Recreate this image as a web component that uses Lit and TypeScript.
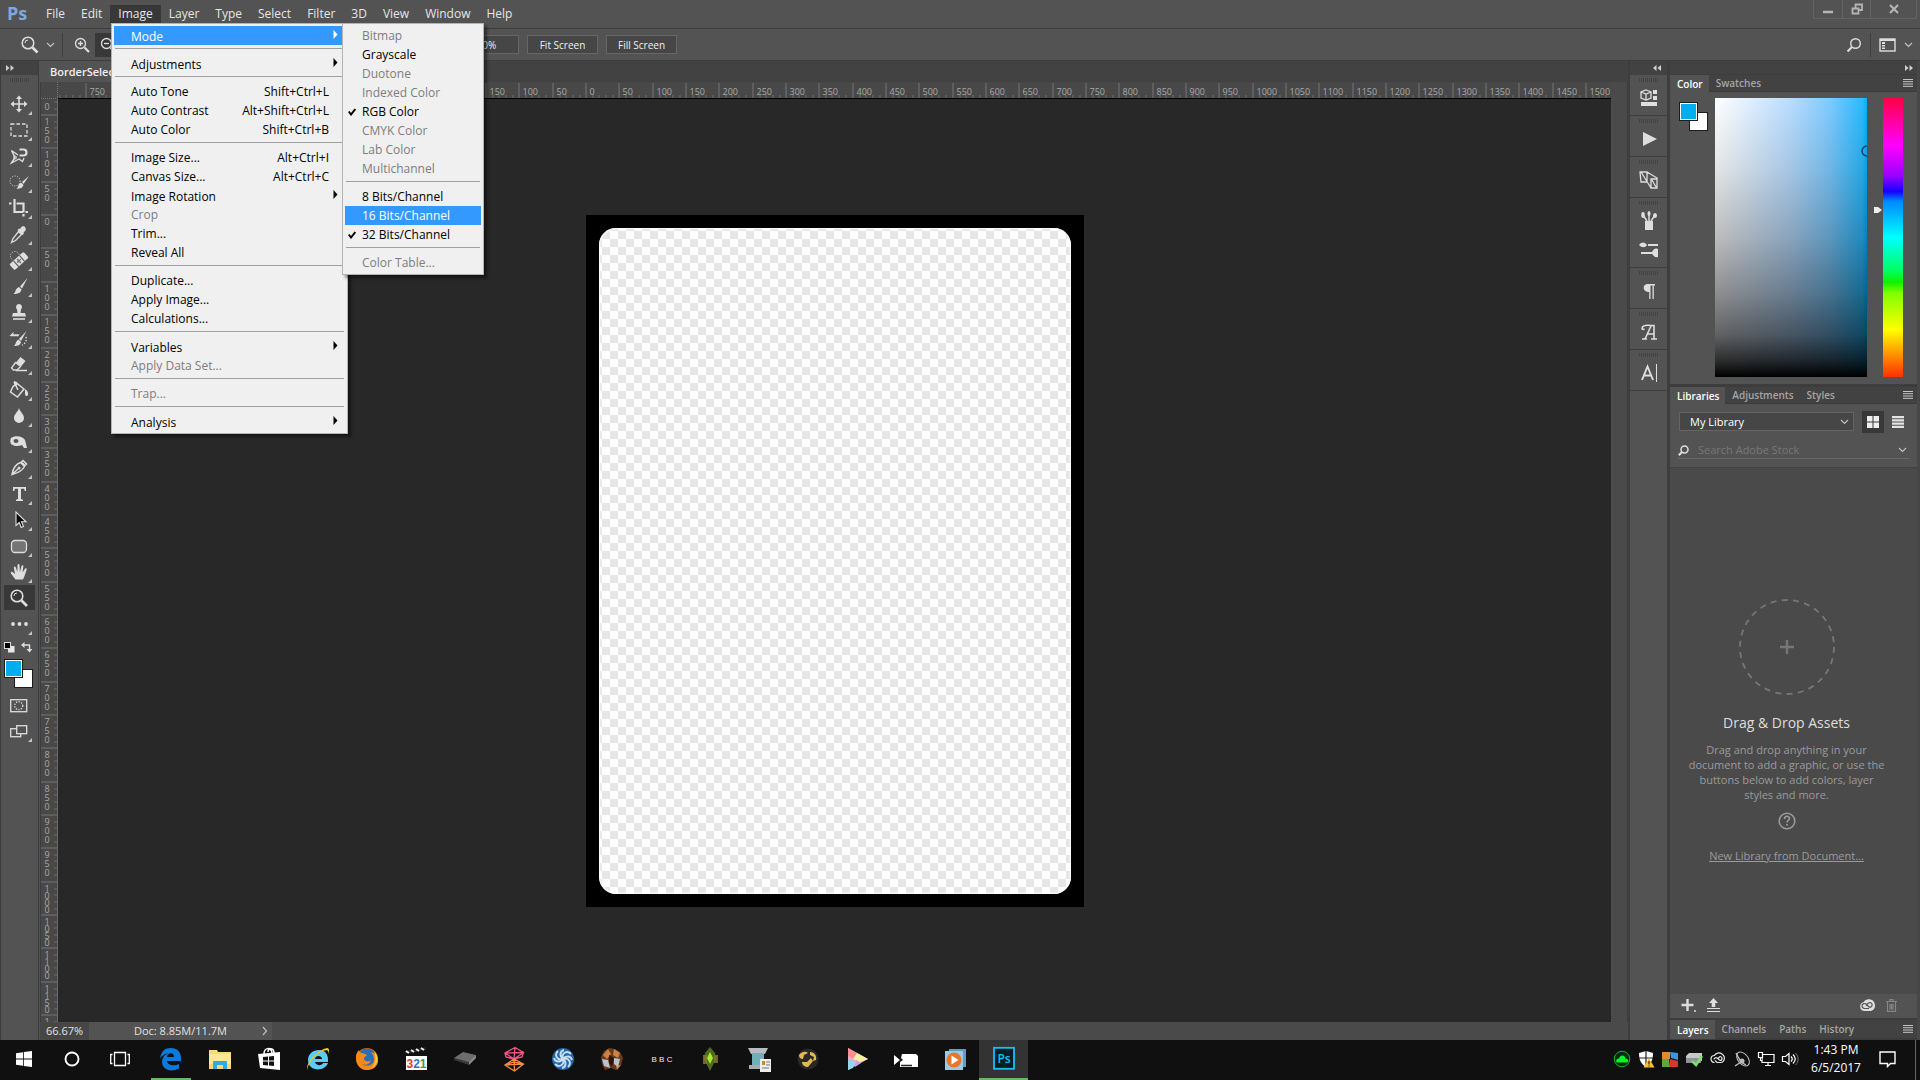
import { LitElement, html, svg, css, nothing, TemplateResult } from "lit";
import { customElement } from "lit/decorators.js";
import { classMap } from "lit/directives/class-map.js";

interface MenuEntry {
  label?: string;
  keys?: string;
  off?: boolean;
  sub?: boolean;
  check?: boolean;
  hot?: boolean;
}

const SEP: MenuEntry = {};

const IMAGE_MENU: MenuEntry[] = [
  { label: "Mode", sub: true, hot: true },
  SEP,
  { label: "Adjustments", sub: true },
  SEP,
  { label: "Auto Tone", keys: "Shift+Ctrl+L" },
  { label: "Auto Contrast", keys: "Alt+Shift+Ctrl+L" },
  { label: "Auto Color", keys: "Shift+Ctrl+B" },
  SEP,
  { label: "Image Size...", keys: "Alt+Ctrl+I" },
  { label: "Canvas Size...", keys: "Alt+Ctrl+C" },
  { label: "Image Rotation", sub: true },
  { label: "Crop", off: true },
  { label: "Trim..." },
  { label: "Reveal All" },
  SEP,
  { label: "Duplicate..." },
  { label: "Apply Image..." },
  { label: "Calculations..." },
  SEP,
  { label: "Variables", sub: true },
  { label: "Apply Data Set...", off: true },
  SEP,
  { label: "Trap...", off: true },
  SEP,
  { label: "Analysis", sub: true },
];

const MODE_MENU: MenuEntry[] = [
  { label: "Bitmap", off: true },
  { label: "Grayscale" },
  { label: "Duotone", off: true },
  { label: "Indexed Color", off: true },
  { label: "RGB Color", check: true },
  { label: "CMYK Color", off: true },
  { label: "Lab Color", off: true },
  { label: "Multichannel", off: true },
  SEP,
  { label: "8 Bits/Channel" },
  { label: "16 Bits/Channel", hot: true },
  { label: "32 Bits/Channel", check: true },
  SEP,
  { label: "Color Table...", off: true },
];

const svgIcon = (w: number, h: number, body: unknown) => html`<svg
  width=${w}
  height=${h}
  viewBox="0 0 ${w} ${h}"
  aria-hidden="true"
>${body}</svg>`;

const chevron = () =>
  svgIcon(9, 6, svg`<path d="M1 1l3.5 3.5L8 1" fill="none" stroke="#c4c4c4" stroke-width="1.1"/>`);
const doubleArrow = (left: boolean) =>
  svgIcon(
    8,
    6,
    left
      ? svg`<path d="M3.5 0v6L0 3zM8 0v6L4.500 3z" fill="#d0d0d0"/>`
      : svg`<path d="M0 0v6l3.500-3zM4.500 0v6L8 3z" fill="#d0d0d0"/>`
  );
const burger = () => svgIcon(10, 8, svg`<path d="M0 .5h10M0 2.700h10M0 5h10M0 7.300h10" stroke="#c6c6c6"/>`);

const C = "#dedede";
const brushShape = svg`<path d="M20.500 4L13 12.500l2 2z M12 13l2.500 2.500c-.5 3-3 4.500-8 4.500 2.500-1.500 1.500-5.500 5.500-7z" fill=${C}/>`;

const TOOLS: [string, TemplateResult][] = [
  ["Move", svg`<path d="M12 5v14M5 12h14" stroke=${C} stroke-width="1.600"/><path d="M12 3.500l3 3.500H9zM12 20.500l3-3.500H9zM3.500 12L7 9v6zM20.500 12L17 9v6z" fill=${C}/>`],
  ["Marquee", svg`<rect x="4" y="6" width="16" height="12" fill="none" stroke=${C} stroke-width="1.300" stroke-dasharray="3.500 2"/>`],
  ["Lasso", svg`<path d="M4.500 6.500L11 11M4.500 6.500l3.500 7-3.500 5.500 7.500-4 3.500 2.500 1.500-3.500" fill="none" stroke=${C} stroke-width="1.400"/><path d="M12.500 5.500h4a2.800 2.800 0 0 1 0 6h-4" fill="none" stroke=${C} stroke-width="2.200"/><circle cx="8" cy="13.500" r="1.500" fill="none" stroke=${C}/>`],
  ["Quick selection", svg`<circle cx="8" cy="11" r="5" fill="none" stroke=${C} stroke-dasharray="1 1.500"/><path d="M22 6l-7 6 1.500 2zM14 12.500l2.500 2.500c-1 3-3 3.500-7 4 2-1.500 1.500-5 4.500-6.500z" fill=${C}/>`],
  ["Crop", svg`<path d="M7.500 3v13H16M2 7.500h2.500M9.500 7.500h7v9M16.500 18v2.500M18.500 16h2.500" fill="none" stroke=${C} stroke-width="2.200"/>`],
  ["Eyedropper", svg`<path d="M14 5.500c2-3 6 0 4.500 3l-2 2 .5 1-1.500 1.500-5-5L12 6.500l1 .5z" fill=${C}/><path d="M11.500 9.500l3 3-6 6-4 2 1.500-4z" fill="none" stroke=${C} stroke-width="1.300"/>`],
  ["Healing brush", svg`<circle cx="8" cy="8" r="4.500" fill="none" stroke=${C} stroke-dasharray="1 1.500"/><g transform="rotate(-42 12 13)"><rect x="2.500" y="9" width="19" height="8" rx="1.500" fill=${C}/><path d="M8 9v8M16 9v8" stroke="#535353"/><path d="M12 10.500v5M9.800 13h4.500" stroke="#535353" stroke-width="1.600" stroke-dasharray="1.300 .6"/></g>`],
  ["Brush", brushShape],
  ["Clone stamp", svg`<path d="M12 4a3.200 3.200 0 0 1 2 5.500L13.500 13H18l1 3.500H5L6 13h4.500L10 9.500A3.200 3.200 0 0 1 12 4z" fill=${C}/><path d="M6 19h12" stroke=${C} stroke-width="1.600"/>`],
  ["History brush", svg`<path d="M19.500 5L12 13l2 2zM11.500 13.500L14 16c-.5 3-3 4-7 4 2-1.500 1.500-5 4.500-6.500z" fill=${C}/><path d="M2.500 10l4-4v2.500c2-.5 4-.5 6 0l-1.500 2c-2-.5-6 0-8.500-.5z" fill=${C}/><path d="M19 11c1 4-1 7-4 8" fill="none" stroke=${C} stroke-dasharray="1.300 1.700" stroke-width="1.400"/>`],
  ["Eraser", svg`<path d="M13.500 5l5 4-4.500 5.500-5-4z" fill=${C}/><path d="M8.500 10.500l5 4-3.500 3.500H6.500L4.500 16zM9 18.500h11" fill="none" stroke=${C} stroke-width="1.300"/>`],
  ["Paint bucket", svg`<path d="M6 8.500L3.500 14l7 5 6.500-8-7-5.500zM7 4l4 8" fill="none" stroke=${C} stroke-width="1.500"/><path d="M7 3l3 1v4l-3-2zM18 11c3 2 3.500 4 3 6-1 2-3 1-3-1z" fill=${C}/>`],
  ["Blur", svg`<path d="M12 4c1 4 5 6 5 10a5 5 0 0 1-10 0c0-4 4-6 5-10z" fill=${C}/>`],
  ["Dodge", svg`<path d="M4 8c4-3 12-2 14 2l2 8h-3l-2-3c-4 2-9 1-11-1-1-2-1-4 0-6z" fill=${C}/><ellipse cx="9" cy="11" rx="2.500" ry="2" fill="#535353"/>`],
  ["Pen", svg`<path d="M16 4.500l3.500 3.500-1.500 1.500-3.500-3.500zM13.500 6.500l4 4c-2 4-5 6-12.500 8 1-6 4-10.500 8.500-12zM5 18.500l6-5.500" fill="none" stroke=${C} stroke-width="1.500"/><circle cx="12" cy="12" r="1.500" fill=${C}/>`],
  ["Type", svg`<path d="M6 5h13v4h-1.200L17 6.700h-3V17l2 .8V19H9v-1.200l2-.8V6.700H8L7.200 9H6z" fill=${C}/>`],
  ["Path selection", svg`<path d="M9 4v13.500l3.200-3 2 5 2.300-1-2-4.700h4.500z" fill="#0a0a0a" stroke=${C} stroke-width="1.100"/>`],
  ["Rounded rectangle", svg`<rect x="4.500" y="6.500" width="15" height="12" rx="3.500" fill="#757575" stroke=${C} stroke-width="1.300"/>`],
  ["Hand", svg`<path d="M8.500 19.500L4 13.500c-.8-1.500.7-2.300 1.800-1.200L8 14 6.800 7.500c0-1.400 1.600-1.500 2 0L10.300 12 10.500 5c.2-1.500 1.900-1.500 2 0l.4 7 1.600-6c.5-1.300 2-1 1.900.3L15.500 12.500 18 8.800c.8-1 2-.4 1.700.7L17.500 16 16 19.500z" fill=${C}/>`],
  ["Zoom", svg`<circle cx="10" cy="10" r="5.800" fill="none" stroke=${C} stroke-width="1.600"/><path d="M7 10a3 3 0 0 1 3-3" fill="none" stroke=${C}/><path d="M14.500 14.500l5.500 5.500" stroke=${C} stroke-width="2.600"/>`],
  ["More tools", svg`<circle cx="6" cy="12" r="1.900" fill=${C}/><circle cx="12.500" cy="12" r="1.900" fill=${C}/><circle cx="19" cy="12" r="1.900" fill=${C}/>`],
];

const DOCK: [string, TemplateResult][][] = [
  [["Properties", svg`<path d="M7 2l5 2v6l-5 2-5-2V4z M2 4l5 2 5-2M7 6v6" fill="none" stroke=${C} stroke-width="1.300"/><path d="M14 2h4v4h-4zM14 8h4v4h-4zM2 14h16v4H2z" fill=${C}/>`]],
  [["Actions", svg`<path d="M4 3l14 7-14 7z" fill=${C}/>`]],
  [["Clone source", svg`<path d="M1 2h7v10H2zM2 2l10 16M8 2l10 6v10h-6V9h6M13 10l4 7" fill="none" stroke=${C} stroke-width="1.300"/>`]],
  [
    ["Brush presets", svg`<path d="M6 10h8v9H6z" fill=${C}/><path d="M8 10L4 4M10 10V3M12 10l4-6" stroke=${C} stroke-width="1.500"/><ellipse cx="4" cy="4" rx="1.800" ry="3" fill=${C}/><ellipse cx="10" cy="2.500" rx="1.500" ry="2.500" fill=${C}/><ellipse cx="16" cy="4.500" rx="2" ry="2.500" fill=${C}/>`],
    ["Brush", svg`<path d="M9 5h10M2 13h12" stroke=${C} stroke-width="2"/><path d="M0 5c3-3.500 6-3 8 0-2 3-5 3-8 0zM13 13c1-5 5-5 6-4v8c-3 1-5-1-6-4z" fill=${C}/>`],
  ],
  [["Paragraph", svg`<path d="M9 3h7v1.500h-1.200V18h-1.300V4.500h-2V18h-1.300v-7C3 11 3 3 9 3z" fill=${C}/>`]],
  [["Glyphs", svg`<path d="M3 6c1-3 5-3 9-2.500h3V17M12 4L6 17M3 17h5M12 17h6M8 12h7M3 6c0 2 2 2 2 .5" fill="none" stroke=${C} stroke-width="1.600"/>`]],
  [["Character", svg`<path d="M3 17L8.500 3.500 14 17M5 12.500h7" fill="none" stroke=${C} stroke-width="1.900"/><path d="M17.500 1v18" stroke=${C}/>`]],
];

const APPS: [string, TemplateResult][] = [
  ["Edge", svg`<path d="M2 13C3 5 7 2 13 2c6 0 10 4 10 10v3H9c1 5 8 5 12 3v4.500C12 27 4 23 4 16c0-4 2-7 6-8.500C5 8 3 11 2 13zM9 11h7c0-5-6-5-7 0z" fill="#0a7bdc"/>`],
  ["File Explorer", svg`<path d="M2 4h8l1 2h13v17H2z" fill="#fbd976"/><path d="M2 8h22v10H2z" fill="#fee79a"/><path d="M6 15h14v8h-4v-4h-6v4H6z" fill="#33a9e0"/>`],
  ["Store", svg`<path d="M2 8l22-2v18L4 22z" fill="#fff"/><path d="M8 8c0-7 8-7 8-1M12 6c0-5 6-4 6 1" fill="none" stroke="#fff" stroke-width="1.500"/><path d="M7 11l5-.5v4H7zM13 10.400l5-.4v4.500h-5zM7 15.500h5v4L7 19zM13 15.500h5V20l-5-.5z" fill="#111"/>`],
  ["Internet Explorer", svg`<path d="M3 14C3 8 8 4 14 4c6 0 9 4 9 10v2H10c1 4 7 4 8 1h5c-3 9-20 9-20-3zm7-1h7c0-4-7-4-7 0z" fill="#5ccbf5"/><path d="M3 24C-1 19 12 4 22 2c3 0 2 4 1 6 1-5-2-4-5-3C10 8 1 20 3 24z" fill="#f7c52c"/>`],
  ["Firefox", svg`<circle cx="13" cy="13" r="11" fill="#e66000"/><circle cx="13" cy="11" r="8.500" fill="#2a6fb5"/><path d="M2 11c0-4 2-6 3-7 0 2 1 3 3 3 2 1 4 1 5 2-1 2-3 1-3 4 1 3 5 3 7 1-1 5-7 6-10 3 3 4 9 4 12 0 2-3 1-7-2-11 5 2 7 6 7 9 0 5-5 9-11 9C6 24 2 18 2 11z" fill="#f58a1c"/><path d="M20 5c4 4 4 8 3 11-1 3-3 5-6 7 5-5 5-12 3-18z" fill="#fbd13c"/>`],
  ["Media Player Classic", svg`<path d="M2 5l21-4v3L2 8z" fill="#222"/><path d="M3 5l3 2M8 4l3 2M13 3l3 2M18 2l3 2" stroke="#eee" stroke-width="2"/><path d="M3 10h21v14H3z" fill="#fff"/><text x="13.500" y="21.500" text-anchor="middle" font-size="12" font-weight="700" font-family="Liberation Sans, sans-serif"><tspan fill="#d8442c">3</tspan><tspan fill="#2a74c8">2</tspan><tspan fill="#3f9c42">1</tspan></text>`],
  ["Drive", svg`<path d="M2 12l9-6 13 3-7 9z" fill="#6c6c6c"/><path d="M2 12l15 4v3L2 14z" fill="#383838"/><path d="M17 16l7-7v3l-7 7z" fill="#8a8a8a"/>`],
  ["Hex", svg`<g fill="none" stroke-width="1.300"><path d="M14 1.500L4 7l9 6 9.500-6.500zM14 1.500L13 13M4 7l18.500-.5M4 7l1 4 8 2 8-2 1.500-4.500" stroke="#ee5684"/><path d="M13 13l-9 6 9.500 6 9-7zM13 13l.5 12M4 19l18.500-1M4 19l9-3 9.500 2" stroke="#f28a48"/></g>`],
  ["Browser", svg`<circle cx="13" cy="13" r="11" fill="#2565a8"/><g fill="none" stroke="#c6e2f6" stroke-width="1.900"><path d="M13 13c-2-6 4-9 8-5M13 13c6-2 9 4 5 8M13 13c2 6-4 9-8 5M13 13c-6 2-9-4-5-8M13 13c3-4 8-3 9 1M13 13c4 3 3 8-1 9M13 13c-3 4-8 3-9-1M13 13c-4-3-3-8 1-9"/></g>`],
  ["Game", svg`<path d="M5 5l5-3 6 1 5 3 3 6-2 7-5 5-5-2-6 2-3-6-1-7z" fill="#6d3b1c"/><path d="M4 9l5-6 3 5-4 5zM15 3l6 4-2 5-5-3zM17 20l5-1-4 5z" fill="#c98445"/><path d="M3 13l6 1 2 8-6-2zM15 12l6 1-2 8-4-3z" fill="#b9c4cf"/><path d="M10 9l5 3-2 9-3-4z" fill="#2c150b"/>`],
  ["BBC", svg`<text x="14" y="16" text-anchor="middle" font-size="8" fill="#eee" font-family="Liberation Sans, sans-serif">B B C</text>`],
  ["Plumbob", svg`<path d="M13 1l5 6 1 6-6 12-6-12 1-6z" fill="#4d6b1f"/><path d="M6 9h4v9H6zM17 9h4v8h-4z" fill="#8a7c2c" opacity=".8"/><path d="M13 6l3 6-3 6-3-6z" fill="#a5e82d"/>`],
  ["Scanner", svg`<path d="M2 2h20l-3 6H5z" fill="#b7bcc0"/><path d="M6 7h12v13H6z" fill="#6fb0bb"/><path d="M3 19h17v4H3z" fill="#a8adb0"/><path d="M14 13h11v13H14z" fill="#eee"/><path d="M16 15h3v4h-3z" fill="#b5903a"/><path d="M20 16h4M20 19h4M16 22h7" stroke="#777"/>`],
  ["Disc", svg`<circle cx="13" cy="13" r="10.500" fill="#2b2723"/><path d="M4 9c3-4 7-4 9-2l-4 2-1 4c-2 0-4-1-4-4zM15 6c4 0 7 3 6 8l-3 1 1-4-4-2zM7 16l5 0 4-4 2 3-5 6c-3 0-6-2-6-5z" fill="#e1b758"/>`],
  ["Play", svg`<path d="M4 2l20 11L4 24z" fill="#f2a9cf"/><path d="M4 2l9 5-4 6-5-3z" fill="#ff8e8e"/><path d="M13 7l11 6-8 3-7-3z" fill="#f4f1a0"/><path d="M4 14l7 1-2 7-5 2z" fill="#8fd9e8"/><path d="M12 14l5 3-6 4z" fill="#c7a1ee"/>`],
  ["Camera", svg`<path d="M1 9l6 5-6 5z M9 8h14l2 2v11H7v-5l3-2-2-2z" fill="#fff"/><path d="M8 19.500h11" stroke="#222" stroke-width="1.500"/>`],
  ["Media Player", svg`<path d="M7 3h17v18H7z" fill="#5f9ec4"/><path d="M3 5h18v19H3z" fill="#9dcbe4"/><circle cx="12" cy="14" r="7.500" fill="#e8762a"/><path d="M9.500 9.500l7 4.500-7 4.500z" fill="#fff"/>`],
  ["Photoshop", svg`<rect x="3" y="1.800" width="20" height="21" fill="#051e26" stroke="#16c0f5" stroke-width="1.800"/><text x="13" y="17" text-anchor="middle" font-size="12" font-weight="600" fill="#16c0f5" font-family="Open Sans, sans-serif">Ps</text>`],
];

const TRAY: [string, TemplateResult][] = [
  ["Cloud", svg`<circle cx="9" cy="9" r="7.800" fill="#062a0c" stroke="#12b822"/><path d="M3.500 12.500c-1-3 1-4 2.500-4 1-4 6-4 6.500 0 3 0 3.500 3 2 4z" fill="#0df52a"/>`],
  ["Security", svg`<path d="M9 1l7 2c0 7-2 11-7 14C4 14 2 10 2 3z" fill="#fff"/><path d="M9 1v16M2 8h14" stroke="#222" stroke-width="1.200"/><path d="M12 8l5.500 9.500h-11z" fill="#fbc02d"/><path d="M12 11v3.500M12 15.500v1" stroke="#222" stroke-width="1.200"/>`],
  ["Antivirus", svg`<path d="M1 2h8v7H1z" fill="#e08b2d"/><path d="M9 2l8 1v7l-7-2z" fill="#3f97d8"/><path d="M1 9h7l1 8H1z" fill="#5fa83e"/><path d="M9 9l8 2v6H9z" fill="#d63a2b"/>`],
  ["Safely remove", svg`<path d="M1 6l3-3h13v8H1z" fill="#c4c8ca"/><path d="M1 8h15v5H1z" fill="#8f9395"/><path d="M7 11l4 4 6-9" fill="none" stroke="#7be070" stroke-width="2.600"/>`],
  ["Creative Cloud", svg`<path d="M5.500 12.500a3.500 3.500 0 0 1 0-7c1-2.500 5-3.500 7.500-1.500 4 2.500 2.500 8.500-1.500 8.500H8L6 10.500M5 9.500a2 2 0 0 1 3-1.500l3 2.500a2 2 0 1 0 0-4L8.500 9" fill="none" stroke="#e8e8e8" stroke-width="1.200"/>`],
  ["Satellite", svg`<ellipse cx="10" cy="9" rx="5" ry="8" transform="rotate(-40 10 9)" fill="none" stroke="#c2c2c2"/><path d="M3 3l5 9 5 3M2 16l6-4" stroke="#c2c2c2" stroke-width="1.400" fill="none"/><circle cx="9" cy="11" r="2.500" fill="#bbb"/>`],
  ["Network", svg`<path d="M5 4.500h12v8H5zM8 15.500h6M11 12.500v3" fill="none" stroke="#fff" stroke-width="1.200"/><path d="M1.500 2.500h4v5h-4zM3.500 7.500v3h2" fill="#101010" stroke="#fff" stroke-width="1.200"/>`],
  ["Volume", svg`<path d="M1.500 6.500h3l3.500-3v11l-3.500-3h-3zM10 6.500c1.500 1.500 1.500 3.500 0 5M12 4.500c3 3 3 6 0 9" fill="none" stroke="#fff" stroke-width="1.200"/><path d="M14.500 3c3.500 4 3.500 8 0 12" fill="none" stroke="#777"/>`],
];

/* Screen pixels for fifty ruler units at the current zoom. */
const STEP = 100 / 3;

@customElement("ps-ruler")
class PsRuler extends LitElement {
  static properties = { vertical: { type: Boolean } };
  declare vertical: boolean;

  static styles = css`
    :host {
      display: block;
      overflow: hidden;
      background: #484848;
    }
    svg {
      display: block;
      width: 100%;
      height: 100%;
    }
    text {
      font: 9px "Open Sans", sans-serif;
      fill: #a8a8a8;
    }
    .major {
      stroke: #747474;
    }
    .minor {
      stroke: #6c6c6c;
    }
  `;

  private across() {
    const marks: TemplateResult[] = [];
    for (let n = -16; n < 31; n++) {
      const x = Math.round(n * STEP);
      marks.push(svg`<path class="major" d="M${x + 0.5} 1v15"/>`);
      if (n > -16) {
        marks.push(svg`<text x=${x + 4} y="13">${Math.abs(n * 50)}</text>`);
      }
      for (let k = 1; k < 5; k++) {
        marks.push(svg`<path class="minor" d="M${Math.round(x + (k * STEP) / 5) + 0.5} 13v3"/>`);
      }
    }
    return svg`<svg x="50%" overflow="visible"><g transform="translate(-249 0)">${marks}</g></svg>`;
  }

  private down() {
    const marks: TemplateResult[] = [];
    for (let n = -4; n < 25; n++) {
      const y = Math.round(n * STEP);
      const digits = String(Math.abs(n * 50)).split("");
      const pitch = digits.length > 3 ? 7 : 9;
      marks.push(svg`<path class="major" d="M0 ${y + 0.5}h16"/>`);
      digits.forEach((d, i) => {
        const base = y + 10 + i * pitch;
        if (base > -108 && base < 812) {
          marks.push(svg`<text x="6" y=${base} text-anchor="middle">${d}</text>`);
        }
      });
      for (let k = 1; k < 5; k++) {
        marks.push(svg`<path class="minor" d="M13 ${Math.round(y + (k * STEP) / 5) + 0.5}h3"/>`);
      }
    }
    return svg`<svg y="50%" overflow="visible"><g transform="translate(0 -346)">${marks}</g></svg>`;
  }

  render() {
    return html`<svg aria-hidden="true">${this.vertical ? this.down() : this.across()}</svg>`;
  }
}

@customElement("ps-menu")
class PsMenu extends LitElement {
  static properties = { entries: { attribute: false } };
  declare entries: MenuEntry[];

  static styles = css`
    :host {
      display: block;
      box-sizing: border-box;
      padding: 2px;
      background: #f0f0f0;
      border: 1px solid #b4b4b4;
      box-shadow: 3px 3px 3px rgba(0, 0, 0, 0.45);
    }
    button {
      display: flex;
      align-items: center;
      width: 100%;
      height: 19px;
      padding: 0 16px 0 17px;
      border: 0;
      background: none;
      color: #000;
      font: 12px/19px "Open Sans", "Noto Sans", sans-serif;
      text-align: left;
      white-space: nowrap;
      position: relative;
    }
    .off {
      color: #7d7d7d;
    }
    .hot {
      background: #3399ff;
      color: #fff;
    }
    .label {
      flex: 1;
    }
    .sub {
      padding-right: 7px;
    }
    .sub .label {
      padding-top: 2px;
    }
    .sub svg {
      margin-bottom: 3px;
    }
    .tick {
      position: absolute;
      left: 3px;
      top: 6px;
    }
    hr {
      height: 1px;
      margin: 3px 1px 5px;
      border: 0;
      background: #a0a0a0;
    }
  `;

  render() {
    return (this.entries ?? []).map((e) =>
      e.label
        ? html`<button
            role="menuitem"
            ?disabled=${!!e.off}
            class=${classMap({ off: !!e.off, hot: !!e.hot, sub: !!e.sub })}
          >
            ${e.check
              ? html`<svg class="tick" width="8" height="8" viewBox="0 0 8 8"><path d="M.8 3.500L3 6.500 7.300 1" fill="none" stroke="#000" stroke-width="1.900" /></svg>`
              : nothing}
            <span class="label">${e.label}</span>
            ${e.keys ? html`<span>${e.keys}</span>` : nothing}
            ${e.sub
              ? html`<svg width="5" height="9" viewBox="0 0 5 9"><path d="M.5 0L4.500 4.500.5 9z" fill="currentColor" /></svg>`
              : nothing}
          </button>`
        : html`<hr />`
    );
  }
}

@customElement("ps-tabs")
class PsTabs extends LitElement {
  static properties = { names: { attribute: false } };
  declare names: string[];

  static styles = css`
    :host {
      display: flex;
      align-items: stretch;
      height: 17px;
      background: #424242;
      border-bottom: 1px solid #3c3c3c;
    }
    button {
      padding: 0 6px 0 7px;
      border: 0;
      background: none;
      color: #a6a6a6;
      font: 600 10px/16px "Open Sans", sans-serif;
    }
    .on {
      background: #535353;
      color: #fff;
      margin-bottom: -1px;
    }
    .more {
      display: flex;
      align-items: center;
      margin-left: auto;
      padding: 0 4px;
    }
  `;

  render() {
    return html`${(this.names ?? []).map(
        (n, i) => html`<button role="tab" class=${i ? "" : "on"}>${n}</button>`
      )}
      <button class="more" aria-label="Panel menu">${burger()}</button>`;
  }
}

@customElement("app-root")
class AppRoot extends LitElement {
  static styles = css`
    :host {
      display: flex;
      flex-direction: column;
      height: 100vh;
      overflow: hidden;
      position: relative;
      background: #535353;
      color: #e6e6e6;
      font: 12px "Open Sans", "Noto Sans", sans-serif;
    }
    * {
      box-sizing: border-box;
    }
    button {
      padding: 0;
      border: 0;
      background: none;
      color: inherit;
      font: inherit;
    }
    svg {
      display: block;
    }

    /* menu bar */
    .menubar {
      display: flex;
      align-items: flex-start;
      height: 29px;
      border-bottom: 1px solid #3d3d3d;
    }
    .logo {
      width: 38px;
      padding-left: 7px;
      color: #7fa9d9;
      font: 700 18px/26px "Open Sans", sans-serif;
    }
    .menubar nav {
      display: flex;
      padding-top: 5px;
    }
    .menubar nav button {
      height: 18px;
      padding: 0 8px;
      line-height: 18px;
    }
    .menubar nav .open {
      background: #383838;
    }
    .winbtns {
      display: flex;
      margin: 0 3px 0 auto;
      border: 1px solid #636363;
      border-top: 0;
      height: 19px;
    }
    .winbtns button {
      display: grid;
      place-items: center;
      width: 28px;
    }
    .winbtns button + button {
      border-left: 1px solid #636363;
    }
    .winbtns .close {
      width: 46px;
    }

    /* options bar */
    .options {
      display: flex;
      align-items: center;
      height: 32px;
      border-bottom: 1px solid #3d3d3d;
      padding: 0 7px 0 20px;
    }
    .rule {
      width: 1px;
      height: 24px;
      background: #404040;
    }
    .options .caret {
      padding: 0 7px 0 6px;
    }
    .options .out {
      display: grid;
      place-items: center;
      width: 26px;
      height: 24px;
      background: #383838;
    }
    .zoomin {
      padding: 0 5px 0 11px;
    }
    .presets {
      display: flex;
      gap: 8px;
      margin-left: 327px;
    }
    .presets button {
      width: 71px;
      height: 19px;
      border: 1px solid #666;
      background: #464646;
      color: #f0f0f0;
      font-size: 10px;
      line-height: 16px;
    }
    .right {
      display: flex;
      align-items: center;
      gap: 8px;
      margin-left: auto;
    }

    /* workspace */
    .work {
      display: flex;
      flex: 1;
      min-height: 0;
      background: #535353;
    }
    .strip {
      display: flex;
      align-items: center;
      height: 14px;
      background: #424242;
    }
    .tools {
      display: flex;
      flex-direction: column;
      width: 39px;
      border-right: 1px solid #3d3d3d;
      border-left: 1px solid #3d3d3d;
    }
    .tools .strip {
      padding-left: 5px;
    }
    .grip {
      width: 20px;
      height: 4px;
      margin: 3px auto 0;
      background: repeating-linear-gradient(90deg, #444 0 1px, #535353 1px 2px);
    }
    .toollist {
      display: flex;
      flex-direction: column;
      padding: 9px 3px 0;
      gap: 1px;
    }
    .tool {
      position: relative;
      display: block;
      width: 31px;
      height: 25px;
      padding: 0 0 0 3px;
    }
    .tool::after {
      content: "";
      position: absolute;
      right: 3px;
      bottom: 1px;
      border: 2px solid transparent;
      border-right-color: #c4c4c4;
      border-bottom-color: #c4c4c4;
    }
    .tool.on {
      background: #383838;
    }
    .tool.on::after {
      display: none;
    }
    .mini {
      display: flex;
      justify-content: space-between;
      padding: 6px 6px 0 3px;
    }
    .swatches {
      display: grid;
      grid-template-columns: 10px 9px 10px;
      grid-template-rows: 10px 9px 10px;
    }
    .swatches span {
      border: 1px solid #1c1c1c;
      outline: 0;
    }
    .swatches .bg {
      grid-area: 2 / 2 / 4 / 4;
      background: #fff;
    }
    .swatches .fg {
      grid-area: 1 / 1 / 3 / 3;
      background: #00aeef;
      box-shadow: inset 0 0 0 1px #fff;
    }
    .tools .swatches {
      margin: 6px 0 0 3px;
    }
    .tail {
      display: flex;
      flex-direction: column;
      gap: 1px;
      padding: 4px 3px 0;
    }
    .tail .quick::after {
      display: none;
    }

    /* document */
    .doc {
      display: flex;
      flex-direction: column;
      flex: 1;
      min-width: 0;
      padding-left: 1px;
    }
    .doctabs {
      display: flex;
      height: 21px;
      background: #424242;
    }
    .doctabs button {
      padding: 0 10px;
      background: #535353;
      color: #f0f0f0;
      font: 600 11px/20px "Open Sans", sans-serif;
    }
    .stage {
      display: grid;
      flex: 1;
      min-height: 0;
      grid-template: 17px 1fr / 17px 1fr 17px;
      border-left: 1px solid #3d3d3d;
    }
    .corner {
      background: #484848;
      border-right: 1px dotted #777;
      border-bottom: 1px dotted #777;
    }
    .top {
      border-bottom: 1px solid #000;
    }
    .side {
      border-right: 1px solid #6a6a6a;
    }
    .scroll {
      background: #4a4a4a;
      border-right: 1px solid #3d3d3d;
      grid-row: span 2;
    }
    .canvas {
      display: grid;
      place-items: center;
      min-height: 0;
      overflow: hidden;
      background: #282828;
    }
    .paper {
      width: 498px;
      height: 692px;
      padding: 13px;
      background: #000;
    }
    .sheet {
      height: 100%;
      border-radius: 17px;
      background: conic-gradient(#fff 25%, #e6e6e6 0 50%, #fff 0 75%, #e6e6e6 0) 3px 3px / 16px 16px;
      box-shadow: inset 0 0 2px 1px #fff;
    }
    .status {
      display: flex;
      align-items: center;
      height: 18px;
      background: #4a4a4a;
      color: #e2e2e2;
      font-size: 11px;
      line-height: 16px;
    }
    .status .pct {
      width: 49px;
      padding-left: 6px;
      background: #464646;
    }
    .status .size {
      display: flex;
      align-items: center;
      width: 183px;
      height: 18px;
      padding: 0 4px 0 45px;
      background: #535353;
      font-size: 11px;
      justify-content: space-between;
    }

    /* icon dock */
    .dock {
      width: 40px;
      border-left: 2px solid #3d3d3d;
      border-right: 1px solid #3d3d3d;
    }
    .dock .strip {
      justify-content: flex-end;
      padding-right: 6px;
    }
    .group {
      display: flex;
      flex-direction: column;
      align-items: center;
      border-bottom: 1px solid #3d3d3d;
      padding-bottom: 7px;
      gap: 9px;
    }
    .group .grip {
      margin-bottom: -3px;
    }

    /* panels */
    .panels {
      display: flex;
      flex-direction: column;
      width: 252px;
      border-left: 2px solid #3d3d3d;
      border-right: 3px solid #474747;
    }
    .panels .strip {
      justify-content: flex-end;
      padding-right: 4px;
      border-bottom: 1px solid #3d3d3d;
    }
    .color {
      display: flex;
      height: 295px;
      padding: 6px 14px 7px 9px;
      border-bottom: 3px solid #3d3d3d;
    }
    .color .swatches {
      margin: 4px 7px 0 0;
    }
    .field {
      position: relative;
      overflow: hidden;
      width: 152px;
      background: linear-gradient(
          rgba(0, 0, 0, 0),
          rgba(0, 0, 0, 0.1) 25%,
          rgba(0, 0, 0, 0.26) 50%,
          rgba(0, 0, 0, 0.44) 70%,
          rgba(0, 0, 0, 0.62) 85%,
          rgba(0, 0, 0, 0.82) 94%,
          #000
        ),
        linear-gradient(90deg, #fff, #b8dcff 50%, #7fcbff 75%, #2bbaff 97%, #00b2f8);
    }
    .field svg {
      position: absolute;
      right: -6px;
      top: 47px;
    }
    .hueslot {
      display: flex;
      flex: 1;
      justify-content: flex-end;
    }
    .hueslot svg {
      margin: 108px 1px 0 0;
    }
    .hue {
      width: 20px;
      background: linear-gradient(
        #ff0044,
        #ff00ff 17%,
        #9a00ff 28%,
        #1400ff 33.500%,
        #0088ff 37%,
        #00ffff 50%,
        #00ff60 62%,
        #10f000 66%,
        #80ff00 70%,
        #ffff00 83%,
        #ff3000
      );
    }
    .libbar {
      display: flex;
      align-items: center;
      height: 35px;
      padding: 0 8px 0 9px;
    }
    .pick {
      display: flex;
      align-items: center;
      flex: 1;
      margin-right: 8px;
      border: 1px solid #646464;
      background: #464646;
      padding-right: 4px;
    }
    .pick select {
      flex: 1;
      height: 17px;
      padding: 0 0 0 10px;
      border: 0;
      appearance: none;
      background: none;
      color: #fff;
      font: 11px/17px "Open Sans", sans-serif;
    }
    .view {
      display: grid;
      place-items: center;
      width: 22px;
      height: 22px;
      margin-right: 3px;
    }
    .view.on {
      background: #383838;
    }
    .view:last-child {
      margin: 0;
    }
    .search {
      display: flex;
      align-items: center;
      height: 17px;
      margin: 3px 7px 8px 8px;
      padding-right: 3px;
      border-bottom: 1px solid #686868;
    }
    .search input {
      flex: 1;
      min-width: 0;
      height: 16px;
      padding: 0 0 0 9px;
      border: 0;
      background: none;
      color: #ddd;
      font: 11px/16px "Open Sans", sans-serif;
    }
    .search input::placeholder {
      color: #777;
    }
    .drop {
      display: flex;
      flex-direction: column;
      align-items: center;
      flex: 1;
      padding: 131px 28px 0 14px;
      border-top: 1px solid #424242;
      background: #4a4a4a;
      color: #9a9a9a;
      text-align: center;
    }
    .drop h2 {
      margin: 18px 0 9px;
      color: #dedede;
      font: 14px/20px "Open Sans", sans-serif;
    }
    .drop p {
      margin: 0 0 10px;
      font-size: 11px;
      line-height: 15px;
      white-space: nowrap;
    }
    .drop a {
      margin-top: 18px;
      color: #9a9a9a;
      font-size: 11px;
      line-height: 15px;
    }
    .libfoot {
      display: flex;
      align-items: center;
      gap: 10px;
      height: 26px;
      padding: 0 20px 2px 11px;
      border-bottom: 2px solid #3d3d3d;
    }
    .libfoot .cc {
      margin-left: auto;
    }
    .panels .last {
      height: 20px;
      border-bottom-width: 2px;
    }

    /* open menus */
    .menu1,
    .menu2 {
      position: absolute;
      top: 23px;
    }
    .menu1 {
      left: 111px;
      width: 237px;
    }
    .menu2 {
      left: 342px;
      width: 142px;
    }

    /* taskbar */
    .taskbar {
      display: flex;
      height: 40px;
      background: #101010;
      color: #fff;
    }
    .taskbar button {
      display: grid;
      place-items: center;
      width: 49px;
      height: 40px;
      border-bottom: 2px solid transparent;
    }
    .taskbar .sys {
      width: 48px;
    }
    .taskbar .edge {
      margin-left: 2px;
      background: linear-gradient(#66b868, #66b868) center bottom / 40px 2px no-repeat border-box;
    }
    .taskbar .live {
      background: #333;
      border-bottom-color: #66b868;
    }
    .tray {
      display: flex;
      margin-left: auto;
    }
    .taskbar .tray button {
      width: 24px;
    }
    .taskbar .tray .clock {
      display: block;
      width: 68px;
      font-size: 12px;
      line-height: 18px;
    }
    .taskbar .tray .note {
      width: 34px;
    }
    .tray .end {
      width: 5px;
      margin-left: 11px;
      border-left: 1px solid #666;
    }
  `;

  private tool(name: string, body: unknown, cls = "") {
    return html`<button class="tool ${cls}" aria-label=${name}>${svgIcon(24, 24, body)}</button>`;
  }

  private lens(sign: string) {
    return svgIcon(
      16,
      16,
      svg`<circle cx="6.500" cy="6.500" r="5" fill="none" stroke=${C} stroke-width="1.300"/><path d="M10.500 10.500l4.500 4.500" stroke=${C} stroke-width="2.200"/><path d=${sign} fill="none" stroke=${C} stroke-width="1.300"/>`
    );
  }

  private header() {
    const menus = ["File", "Edit", "Image", "Layer", "Type", "Select", "Filter", "3D", "View", "Window", "Help"];
    const g = "#b4b4b4";
    return html`
      <header class="menubar">
        <div class="logo">Ps</div>
        <nav>${menus.map((m) => html`<button class=${m === "Image" ? "open" : ""}>${m}</button>`)}</nav>
        <div class="winbtns">
          <button aria-label="Minimize">${svgIcon(12, 12, svg`<path d="M1 9h10" stroke=${g} stroke-width="2.500"/>`)}</button>
          <button aria-label="Restore">${svgIcon(12, 12, svg`<path d="M4.500 5V1.500h6.500v5.500H8.500M1.500 5.500h6v5h-6z" fill="none" stroke=${g} stroke-width="1.800"/>`)}</button>
          <button class="close" aria-label="Close">${svgIcon(12, 12, svg`<path d="M2 2l8 8M10 2l-8 8" stroke=${g} stroke-width="2.200"/>`)}</button>
        </div>
      </header>
      <div class="options">
        <button aria-label="Zoom tool">${svgIcon(20, 20, svg`<circle cx="8" cy="8" r="5.800" fill="none" stroke=${C} stroke-width="1.500"/><path d="M5 8a3 3 0 0 1 3-3" fill="none" stroke=${C}/><path d="M12.500 12.500l5 5" stroke=${C} stroke-width="2.600"/>`)}</button>
        <button class="caret" aria-label="Tool presets">${chevron()}</button>
        <i class="rule"></i>
        <button class="zoomin" aria-label="Zoom in">${this.lens("M6.500 4v5M4 6.500h5")}</button>
        <button class="out" aria-label="Zoom out">${this.lens("M4 6.500h5")}</button>
        <div class="presets">
          <button>100%</button><button>Fit Screen</button><button>Fill Screen</button>
        </div>
        <div class="right">
          <button aria-label="Search">${svgIcon(16, 16, svg`<circle cx="9.500" cy="6.500" r="4.800" fill="none" stroke=${C} stroke-width="1.400"/><path d="M6 10l-4.500 4.500" stroke=${C} stroke-width="2"/>`)}</button>
          <i class="rule"></i>
          <button aria-label="Workspace">${svgIcon(17, 14, svg`<rect x="1" y="1" width="15" height="12" fill="none" stroke=${C} stroke-width="1.400"/><path d="M1 2h15" stroke=${C} stroke-width="2"/><path d="M3 4h3v2H3zM3 7h3v1.500H3zM3 9.500h3V11H3z" fill=${C}/>`)}</button>
          <button aria-label="Workspace list">${chevron()}</button>
        </div>
      </div>
    `;
  }

  private toolbar() {
    return html`
      <aside class="tools">
        <div class="strip">${doubleArrow(false)}</div>
        <div class="grip"></div>
        <div class="toollist">${TOOLS.map(([n, b]) => this.tool(n, b, n === "Zoom" ? "on" : ""))}</div>
        <div class="mini">
          ${svgIcon(11, 11, svg`<rect x="4" y="4" width="6.500" height="6.500" fill="#e8e8e8"/><rect x=".5" y=".5" width="6" height="6" fill="#000" stroke="#ddd"/>`)}
          ${svgIcon(11, 11, svg`<path d="M2 3h6.500v5" fill="none" stroke=${C} stroke-width="1.400"/><path d="M3.500 0v6L0 3zM5.500 7h6l-3 3.500z" fill=${C}/>`)}
        </div>
        <div class="swatches"><span class="bg"></span><span class="fg"></span></div>
        <div class="tail">
          ${this.tool("Quick mask", svg`<rect x="3.700" y="6.700" width="16" height="12" fill="none" stroke=${C} stroke-width="1.300"/><circle cx="11.700" cy="12.700" r="4" fill="none" stroke=${C} stroke-width="1.300" stroke-dasharray="1.300 1.300"/>`, "quick")}
          ${this.tool("Screen mode", svg`<rect x="3.700" y="9.700" width="10" height="8" fill="none" stroke=${C} stroke-width="1.300"/><rect x="9.700" y="6.700" width="10" height="8" fill="#535353" stroke=${C} stroke-width="1.300"/>`)}
        </div>
      </aside>
    `;
  }

  private document() {
    return html`
      <main class="doc">
        <div class="doctabs"><button>BorderSelection.psd</button></div>
        <div class="stage">
          <div class="corner"></div>
          <ps-ruler class="top"></ps-ruler>
          <div class="scroll"></div>
          <ps-ruler class="side" vertical></ps-ruler>
          <div class="canvas"><div class="paper"><div class="sheet"></div></div></div>
        </div>
        <div class="status">
          <span class="pct">66.67%</span>
          <span class="size">Doc: 8.85M/11.7M ${svgIcon(6, 10, svg`<path d="M1 1l3.500 4L1 9" fill="none" stroke="#bbb" stroke-width="1.300"/>`)}</span>
        </div>
      </main>
    `;
  }

  private panels() {
    return html`
      <aside class="dock">
        <div class="strip">${doubleArrow(true)}</div>
        ${DOCK.map(
          (g) => html`<div class="group">
            <div class="grip"></div>
            ${g.map(([n, b]) => html`<button aria-label=${n}>${svgIcon(20, 20, b)}</button>`)}
          </div>`
        )}
      </aside>
      <aside class="panels">
        <div class="strip">${doubleArrow(false)}</div>
        <ps-tabs .names=${["Color", "Swatches"]}></ps-tabs>
        <section class="color">
          <div class="swatches"><span class="bg"></span><span class="fg"></span></div>
          <div class="field">${svgIcon(12, 12, svg`<circle cx="6" cy="6" r="5" fill="none" stroke="#0b3c58" stroke-width="1.300"/>`)}</div>
          <div class="hueslot">
            ${svgIcon(8, 8, svg`<path d="M0 1h4l4 3-4 3H0z" fill="#eee"/>`)}
            <div class="hue"></div>
          </div>
        </section>
        <ps-tabs .names=${["Libraries", "Adjustments", "Styles"]}></ps-tabs>
        <div class="libbar">
          <div class="pick">
            <select aria-label="Library"><option>My Library</option></select>${chevron()}
          </div>
          <button class="view on" aria-label="Grid view">${svgIcon(12, 12, svg`<path d="M0 0h5.500v5.500H0zM6.500 0H12v5.500H6.500zM0 6.500h5.500V12H0zM6.500 6.500H12V12H6.500z" fill="#eee"/>`)}</button>
          <button class="view" aria-label="List view">${svgIcon(12, 12, svg`<path d="M0 1.200h12M0 4.400h12M0 7.600h12M0 10.800h12" stroke="#e4e4e4" stroke-width="2.200"/>`)}</button>
        </div>
        <div class="search">
          ${svgIcon(11, 11, svg`<circle cx="6.500" cy="4.500" r="3.500" fill="none" stroke=${C} stroke-width="1.500"/><path d="M4 7L.8 10.200" stroke=${C} stroke-width="2"/>`)}
          <input aria-label="Search Adobe Stock" placeholder="Search Adobe Stock" />${chevron()}
        </div>
        <section class="drop">
          ${svgIcon(96, 96, svg`<circle cx="48" cy="48" r="47" fill="none" stroke="#777" stroke-width="1.800" stroke-dasharray="6 5.360"/><path d="M48 41v14M41 48h14" stroke="#777" stroke-width="2.500"/>`)}
          <h2>Drag &amp; Drop Assets</h2>
          <p>Drag and drop anything in your<br />document to add a graphic, or use the<br />buttons below to add colors, layer<br />styles and more.</p>
          ${svgIcon(18, 18, svg`<circle cx="9" cy="9" r="7.800" fill="none" stroke="#9a9a9a" stroke-width="1.600"/><path d="M6.500 7c0-3.500 5-3.500 5-.5 0 1.800-2.500 2-2.500 4M9 12v1.800" fill="none" stroke="#9a9a9a" stroke-width="1.600"/>`)}
          <a href="#">New Library from Document...</a>
        </section>
        <div class="libfoot">
          <button aria-label="Add content">${svgIcon(16, 14, svg`<path d="M6.500 1v12M.5 7h12" stroke=${C} stroke-width="2.400"/><circle cx="14" cy="13" r="1" fill=${C}/>`)}</button>
          <button aria-label="Upload">${svgIcon(13, 14, svg`<path d="M6.500 0L11 5H8.300v4H4.700V5H2z" fill=${C}/><path d="M0 10.500h13M0 13.500h13" stroke=${C} stroke-width="1.200"/>`)}</button>
          <button class="cc" aria-label="Creative Cloud">${svgIcon(17, 13, svg`<path d="M5 12a4.500 4.500 0 0 1-.5-8.800C7-1.500 16-.5 16 6.500c0 3-2 5.500-5 5.500z" fill=${C}/><path d="M10 9.500H5.500a2.500 2.500 0 1 1 1.500-4.500l3 3a2.300 2.300 0 1 0-.5-4c-1 .7-1.500 1.500-2.500 2.500" fill="none" stroke="#535353" stroke-width="1.200"/>`)}</button>
          <button aria-label="Delete">${svgIcon(11, 13, svg`<path d="M0 2.500h11M4 2V.7h3V2M1.500 3v9.300h8V3M4 5v5.500M5.500 5v5.500M7 5v5.500" fill="none" stroke="#858585" stroke-width="1.200"/>`)}</button>
        </div>
        <ps-tabs class="last" .names=${["Layers", "Channels", "Paths", "History"]}></ps-tabs>
      </aside>
    `;
  }

  private taskbar() {
    return html`
      <footer class="taskbar">
        <button class="sys" aria-label="Start">${svgIcon(16, 16, svg`<path d="M0 2.200l7-1v6.400H0zM7.800 1L16 0v7.600H7.800zM0 8.400h7v6.400l-7-1zM7.800 8.400H16V16l-8.200-1.100z" fill="#fff"/>`)}</button>
        <button class="sys" aria-label="Cortana">${svgIcon(16, 16, svg`<circle cx="8" cy="8" r="6.500" fill="none" stroke="#fff" stroke-width="1.900"/>`)}</button>
        <button class="sys" aria-label="Task view">${svgIcon(20, 16, svg`<path d="M4.500 1.500h11v13h-11zM2.500 3.500H.7v9h1.800M17.500 3.500h1.800v9h-1.800" fill="none" stroke="#fff" stroke-width="1.300"/>`)}</button>
        ${APPS.map(
          ([n, b]) => html`<button class=${n === "Edge" ? "edge" : n === "Photoshop" ? "live" : ""} aria-label=${n}>${svgIcon(26, 26, b)}</button>`
        )}
        <div class="tray">
          ${TRAY.map(([n, b]) => html`<button aria-label=${n}>${svgIcon(18, 18, b)}</button>`)}
          <button class="clock">1:43 PM<br />6/5/2017</button>
          <button class="note" aria-label="Notifications">${svgIcon(17, 17, svg`<path d="M1 1h15v11.500h-4.500L8.500 15.500v-3H1z" fill="none" stroke="#fff" stroke-width="1.400"/>`)}</button>
          <div class="end"></div>
        </div>
      </footer>
    `;
  }

  render() {
    return html`
      ${this.header()}
      <div class="work">${this.toolbar()}${this.document()}${this.panels()}</div>
      ${this.taskbar()}
      <ps-menu class="menu1" role="menu" .entries=${IMAGE_MENU}></ps-menu>
      <ps-menu class="menu2" role="menu" .entries=${MODE_MENU}></ps-menu>
    `;
  }
}
